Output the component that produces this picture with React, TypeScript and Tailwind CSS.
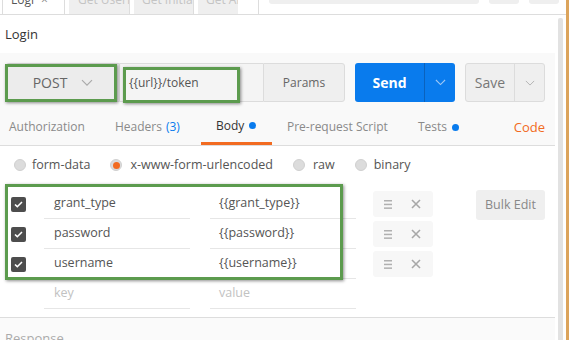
import React from "react";

const Chevron = ({ color = "#aaa", size = 12 }: { color?: string; size?: number }) => (
  <svg width={size} height={size * 0.6} viewBox="0 0 12 7" fill="none">
    <path d="M1 1l5 5 5-5" stroke={color} strokeWidth="1.2" />
  </svg>
);

const Dot = () => <span className="inline-block w-[7px] h-[7px] rounded-full bg-[#097bed] ml-[5px]" />;

const Radio = ({ on }: { on?: boolean }) => (
  <span className="w-[12px] h-[12px] rounded-full bg-[#dcdcdc] border border-[#d0d0d0] flex items-center justify-center shrink-0">
    {on && <span className="w-[7px] h-[7px] rounded-full bg-[#f26b21]" />}
  </span>
);

const Check = () => (
  <span className="w-[15px] h-[15px] rounded-[2px] bg-[#4d4d4d] flex items-center justify-center shrink-0">
    <svg width="9" height="7" viewBox="0 0 9 7" fill="none">
      <path d="M1 3.5l2.3 2.2L8 1" stroke="#fff" strokeWidth="1.6" />
    </svg>
  </span>
);

const Actions = () => (
  <div className="w-[60px] h-[26px] rounded-[3px] bg-[#f7f7f7] flex items-center">
    <svg className="ml-[11px]" width="8" height="9" viewBox="0 0 8 9">
      <rect x="0" y="0" width="8" height="1.5" fill="#b0b0b0" />
      <rect x="0" y="3.7" width="8" height="1.5" fill="#b0b0b0" />
      <rect x="0" y="7.4" width="8" height="1.5" fill="#b0b0b0" />
    </svg>
    <svg className="ml-[19px]" width="10" height="10" viewBox="0 0 10 10">
      <path d="M1 1l8 8M9 1l-8 8" stroke="#a8a8a8" strokeWidth="1.6" />
    </svg>
  </div>
);

const Row = ({ k, v, ph, actions }: { k: string; v: string; ph?: boolean; actions?: boolean }) => (
  <div className="flex h-[30px] items-stretch">
    <div className="w-[44px] flex items-center pl-[11px]">{!ph && <Check />}</div>
    <div className={`w-[146px] border-b border-[#e6e6e6] flex items-center pl-[10px] ${ph ? "text-[#c2c2c2]" : "text-[#555]"}`}>{k}</div>
    <div className="w-[20px]" />
    <div className={`w-[146px] border-b border-[#e6e6e6] flex items-center pl-[9px] ${ph ? "text-[#c2c2c2]" : "text-[#555]"}`}>{v}</div>
    <div className="w-[17px]" />
    <div className="flex items-center">{actions && <Actions />}</div>
  </div>
);

export default function App() {
  return (
    <div className="w-[570px] h-[340px] overflow-hidden bg-white flex text-[12px]" style={{ fontFamily: '"Open Sans", "Noto Sans", sans-serif' }}>
      <div className="w-[566px] flex flex-col">
        {/* top tab bar */}
        <div className="h-[15px] border-b border-[#dddddd] flex items-start overflow-hidden shrink-0">
          <div className="w-[63px] h-[14px] bg-white border-l border-[#dddddd] ml-[2px] border-r flex items-start">
            <span className="ml-[8px] mt-[-7px] leading-[14px] text-[#555]">Logi</span>
            <span className="ml-[7px] mt-[-7px] leading-[14px] text-[#888]">×</span>
          </div>
          <div className="w-[61px] h-[14px] bg-[#efefef] ml-[4px] border-r border-[#dddddd] overflow-hidden">
            <span className="block ml-[9px] mt-[-7px] leading-[14px] text-[#c4c4c4] whitespace-nowrap">Get UserI</span>
          </div>
          <div className="w-[60px] h-[14px] bg-[#efefef] ml-[4px] border-r border-[#dddddd] overflow-hidden">
            <span className="block ml-[8px] mt-[-7px] leading-[14px] text-[#c4c4c4] whitespace-nowrap">Get Initial</span>
          </div>
          <div className="w-[40px] h-[14px] bg-[#efefef] ml-[4px] overflow-hidden">
            <span className="block ml-[8px] mt-[-7px] leading-[14px] text-[#c4c4c4] whitespace-nowrap">Get Al</span>
          </div>
          <div className="w-[1px] h-[14px] bg-[#dddddd] ml-[20px]" />
          <div className="w-[210px] h-[4px] bg-[#efefef] rounded-b-[3px] ml-[10px]" />
          <div className="w-[30px] h-[4px] bg-[#efefef] rounded-b-[3px] ml-[10px]" />
          <div className="w-[30px] h-[4px] bg-[#efefef] rounded-b-[3px] ml-[10px]" />
        </div>

        <div className="flex flex-1">
          <div className="w-[555px] flex flex-col relative">
            {/* title */}
            <div className="h-[38px] flex items-center pl-[5px] pt-[1px] text-[13px] text-[#333] shrink-0">Login</div>

            {/* request area */}
            <div className="bg-[#f9f9f9] border-b border-[#dddddd] shrink-0">
              <div className="flex pt-[10px] h-[49px]">
                <div className="ml-[6px] w-[114px] h-[39px] bg-[#ececec] border border-[#dcdcdc] rounded-l-[3px] flex items-center justify-center gap-[14px] text-[14px] text-[#666]">
                  <span>POST</span>
                  <Chevron color="#aaa" size={12} />
                </div>
                <div className="w-[143px] h-[39px] bg-[#f4f4f4] border-y border-[#dcdcdc] flex items-center pl-[9px] text-[#555]">{"{{url}}/token"}</div>
                <div className="w-[82px] h-[39px] bg-[#efefef] border border-[#dcdcdc] rounded-r-[3px] flex items-center justify-center text-[#666]">Params</div>
                <div className="ml-[10px] w-[100px] h-[39px] bg-[#097bed] rounded-[3px] flex">
                  <div className="w-[69px] flex items-center justify-center text-white font-bold text-[14px]">Send</div>
                  <div className="w-[1px] bg-[#0a62bd]" />
                  <div className="flex-1 flex items-center justify-center"><Chevron color="#9ec8f5" size={11} /></div>
                </div>
                <div className="ml-[10px] w-[80px] h-[39px] bg-[#efefef] border border-[#dcdcdc] rounded-[3px] flex">
                  <div className="w-[48px] flex items-center justify-center text-[#777] text-[14px]">Save</div>
                  <div className="w-[1px] bg-[#dcdcdc]" />
                  <div className="flex-1 flex items-center justify-center"><Chevron color="#b5b5b5" size={10} /></div>
                </div>
              </div>
              {/* tabs */}
              <div className="flex h-[43px] items-stretch text-[#8a8a8a]">
                <div className="w-[100px] pl-[9px] pt-[7px] flex items-center">Authorization</div>
                <div className="w-[101px] pl-[15px] pt-[7px] flex items-center">Headers <span className="text-[#097bed] ml-[4px]">(3)</span></div>
                <div className="w-[71px] pl-[15px] pt-[7px] flex items-center text-[#333] border-b-[3px] border-[#f26b21]">Body<Dot /></div>
                <div className="w-[131px] pl-[15px] pt-[7px] flex items-center">Pre-request Script</div>
                <div className="pl-[15px] pt-[7px] flex items-center">Tests<Dot /></div>
                <div className="ml-auto pr-[10px] pt-[9px] flex items-center text-[#f26b21] text-[13px]">Code</div>
              </div>
            </div>

            {/* radios */}
            <div className="h-[43px] pt-[10px] shrink-0">
              <div className="h-[18px] flex items-center pl-[14px] text-[#555] text-[12.5px]">
                <Radio />
                <span className="ml-[6px]">form-data</span>
                <span className="ml-[20px]"><Radio on /></span>
                <span className="ml-[8px]">x-www-form-urlencoded</span>
                <span className="ml-[20px]"><Radio /></span>
                <span className="ml-[8px]">raw</span>
                <span className="ml-[20px]"><Radio /></span>
                <span className="ml-[7px]">binary</span>
              </div>
            </div>

            {/* table */}
            <div className="flex shrink-0 text-[12.5px]">
              <div className="flex flex-col">
                <Row k="grant_type" v="{{grant_type}}" actions />
                <Row k="password" v="{{password}}" actions />
                <Row k="username" v="{{username}}" actions />
                <Row k="key" v="value" ph />
              </div>
              <div className="ml-[43px] mt-[1px] w-[69px] h-[30px] bg-[#efefef] rounded-[3px] flex items-center justify-center text-[#888]">Bulk Edit</div>
            </div>

            <div className="h-[9px] border-b border-[#dddddd] shrink-0" />
            <div className="flex-1 bg-[#fafafa] pl-[5px] pt-[11px] text-[13px] text-[#aaa] leading-[18px]">Response</div>

            {/* green annotation boxes */}
            <div className="absolute left-[5px] top-[49px] w-[112px] h-[38px] border-[3px] border-[#5c9b4e] shadow-[1px_1px_3px_rgba(0,0,0,0.45)]" />
            <div className="absolute left-[123px] top-[52px] w-[117px] h-[36px] border-[3px] border-[#5c9b4e] shadow-[1px_1px_3px_rgba(0,0,0,0.45)]" />
            <div className="absolute left-[5px] top-[169px] w-[338px] h-[96px] border-[3px] border-[#5c9b4e] shadow-[1px_1px_3px_rgba(0,0,0,0.45)]" />
          </div>
          <div className="w-[11px] flex">
            <div className="w-[5px] ml-[3px] mt-[3px] h-full bg-[#e2e2e2] rounded-t-[2px]" />
          </div>
        </div>
      </div>
      <div className="w-[3px] bg-[#dca45c]" />
      <div className="w-[1px] bg-white" />
    </div>
  );
}
